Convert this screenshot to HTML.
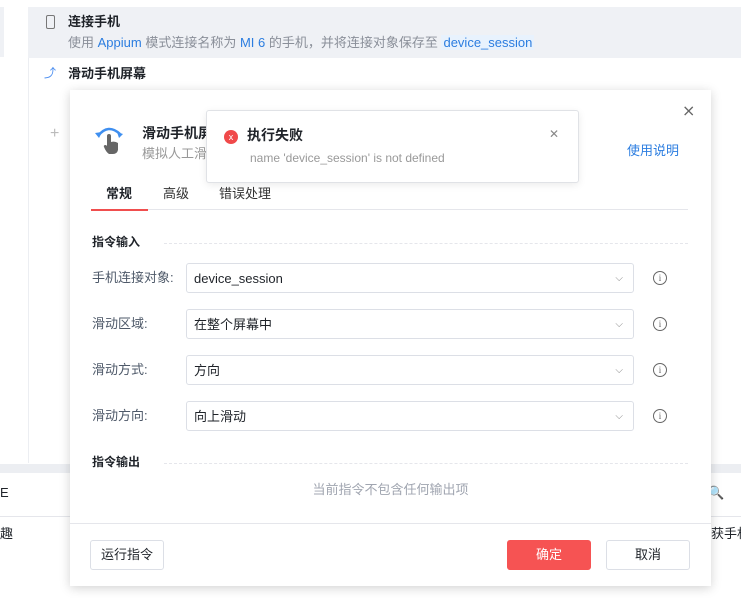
<!DOCTYPE html>
<html><head><meta charset="utf-8"><style>
*{box-sizing:border-box;margin:0;padding:0}
body{width:741px;height:598px;overflow:hidden;background:#fff;font-family:"Liberation Sans","Noto Sans CJK SC",sans-serif;position:relative;font-size:13px;color:#1f2329;line-height:1.25}
.abs{position:absolute;white-space:nowrap}
.sel{position:absolute;left:186px;width:448px;height:30px;border:1px solid #dcdfe6;border-radius:3px;padding-left:7px;line-height:30px;font-size:13px;color:#1f2329}
.sel .ar{position:absolute;right:10px;top:0;color:#888;font-size:10px}
.lab{position:absolute;left:92px;font-size:13px;color:#4e5969}
.info{position:absolute;left:653px;width:14px;height:14px;border:1px solid #666;border-radius:50%;font-size:9px;text-align:center;line-height:12px;color:#666;font-family:"Liberation Serif",serif}
</style></head><body>
<div class="abs" style="left:0;top:7px;width:4px;height:50px;background:#eff1f5"></div>
<div class="abs" style="left:28px;top:7px;width:713px;height:51px;background:#eff1f5"></div>
<div class="abs" style="left:28px;top:58px;width:1px;height:405px;background:#eceef2"></div>
<div class="abs" style="left:46px;top:15px;width:9px;height:14px;border:1.5px solid #777;border-radius:2px"></div>
<div class="abs" style="left:68px;top:14px;font-size:13px;font-weight:bold">连接手机</div>
<div class="abs" style="left:68px;top:35px;font-size:13px;color:#8a8f99">使用 <span style="color:#2b7de0">Appium</span> 模式连接名称为 <span style="color:#2b7de0">MI 6</span> 的手机，并将连接对象保存至 <span style="color:#2b7de0;background:#e8f2fd;padding:0 2px">device_session</span></div>
<div class="abs" style="left:44px;top:66px;font-size:12px;color:#4a8df0">⤴</div>
<div class="abs" style="left:68px;top:66px;font-size:13px;font-weight:bold">滑动手机屏幕</div>
<div class="abs" style="left:0;top:464px;width:70px;height:9px;background:#eceef2"></div>
<div class="abs" style="left:711px;top:464px;width:30px;height:9px;background:#eceef2"></div>
<div class="abs" style="left:0;top:485px;font-size:13px">E</div>
<div class="abs" style="left:0;top:516px;width:70px;height:1px;background:#e5e6eb"></div>
<div class="abs" style="left:0;top:526px;font-size:13px">趣</div>
<div class="abs" style="left:711px;top:516px;width:30px;height:1px;background:#e5e6eb"></div>
<div class="abs" style="left:711px;top:526px;font-size:13px">获手机</div>
<div class="abs" style="left:708px;top:485px;font-size:13px;color:#888">🔍</div>
<div class="abs" style="left:50px;top:124px;font-size:16px;color:#bbb">+</div>

<div class="abs" style="left:70px;top:90px;width:641px;height:496px;background:#fff;box-shadow:0 2px 10px rgba(0,0,0,.18)"></div>
<div class="abs" style="left:682px;top:101px;font-size:16px;color:#666;font-weight:normal;font-family:'DejaVu Sans',sans-serif">×</div>
<svg class="abs" style="left:94px;top:124px" width="34" height="32" viewBox="0 0 34 32">
<path d="M4 12 Q14 -1 26 10" fill="none" stroke="#3f8ff0" stroke-width="2.5"/>
<path d="M1 9 L5 14 L8 8Z M23 8 L29 10 L25 14Z" fill="#3f8ff0"/>
<path d="M13 12 Q13 10 15 10 Q17 10 17 12 L17 18 Q21 17 24 19 L24 26 Q23 30 19 30 L15 30 Q12 28 10 23 Q9 21 12 21 L13 22Z" fill="#666"/>
</svg>
<div class="abs" style="left:142px;top:125px;font-size:14px;font-weight:bold">滑动手机屏</div>
<div class="abs" style="left:142px;top:146px;font-size:13px;color:#999">模拟人工滑</div>
<div class="abs" style="left:627px;top:143px;font-size:13px;color:#2b7de0">使用说明</div>
<div class="abs" style="left:106px;top:186px;font-size:13px;font-weight:bold">常规</div>
<div class="abs" style="left:163px;top:186px;font-size:13px;color:#333">高级</div>
<div class="abs" style="left:219px;top:186px;font-size:13px;color:#333">错误处理</div>
<div class="abs" style="left:91px;top:209px;width:597px;height:1px;background:#e5e6eb"></div>
<div class="abs" style="left:91px;top:209px;width:57px;height:2px;background:#f04e4e"></div>
<div class="abs" style="left:92px;top:235px;font-size:12px;font-weight:bold">指令输入</div>
<div class="abs" style="left:164px;top:243px;width:524px;border-top:1px dashed #e5e6eb"></div>
<div class="lab" style="top:270px">手机连接对象:</div><div class="sel" style="top:263px">device_session<span class="ar">⌵</span></div><div class="info" style="top:271px">i</div>
<div class="lab" style="top:316px">滑动区域:</div><div class="sel" style="top:309px">在整个屏幕中<span class="ar">⌵</span></div><div class="info" style="top:317px">i</div>
<div class="lab" style="top:362px">滑动方式:</div><div class="sel" style="top:355px">方向<span class="ar">⌵</span></div><div class="info" style="top:363px">i</div>
<div class="lab" style="top:408px">滑动方向:</div><div class="sel" style="top:401px">向上滑动<span class="ar">⌵</span></div><div class="info" style="top:409px">i</div>
<div class="abs" style="left:92px;top:455px;font-size:12px;font-weight:bold">指令输出</div>
<div class="abs" style="left:164px;top:463px;width:524px;border-top:1px dashed #e5e6eb"></div>
<div class="abs" style="left:0;top:482px;width:741px;text-align:center;font-size:13px;color:#a0a5b0;padding-left:40px">当前指令不包含任何输出项</div>
<div class="abs" style="left:70px;top:523px;width:641px;height:1px;background:#e5e6eb"></div>
<div class="abs" style="left:90px;top:540px;width:74px;height:30px;border:1px solid #dcdfe6;border-radius:3px;text-align:center;line-height:28px;font-size:13px">运行指令</div>
<div class="abs" style="left:507px;top:540px;width:84px;height:30px;background:#f65353;border-radius:3px;text-align:center;line-height:30px;font-size:13px;color:#fff">确定</div>
<div class="abs" style="left:606px;top:540px;width:84px;height:30px;border:1px solid #dcdfe6;border-radius:3px;text-align:center;line-height:28px;font-size:13px">取消</div>

<div class="abs" style="left:206px;top:110px;width:373px;height:73px;background:#fff;border:1px solid #e0e2e6;border-radius:3px;box-shadow:0 2px 8px rgba(0,0,0,.08)"></div>
<div class="abs" style="left:224px;top:130px;width:14px;height:14px;border-radius:50%;background:#f0494a;color:#fff;font-size:9px;text-align:center;line-height:14px">x</div>
<div class="abs" style="left:247px;top:127px;font-size:14px;font-weight:bold">执行失败</div>
<div class="abs" style="left:549px;top:127px;font-size:12px;color:#888">✕</div>
<div class="abs" style="left:250px;top:151px;font-size:12px;color:#999">name 'device_session' is not defined</div>
</body></html>
